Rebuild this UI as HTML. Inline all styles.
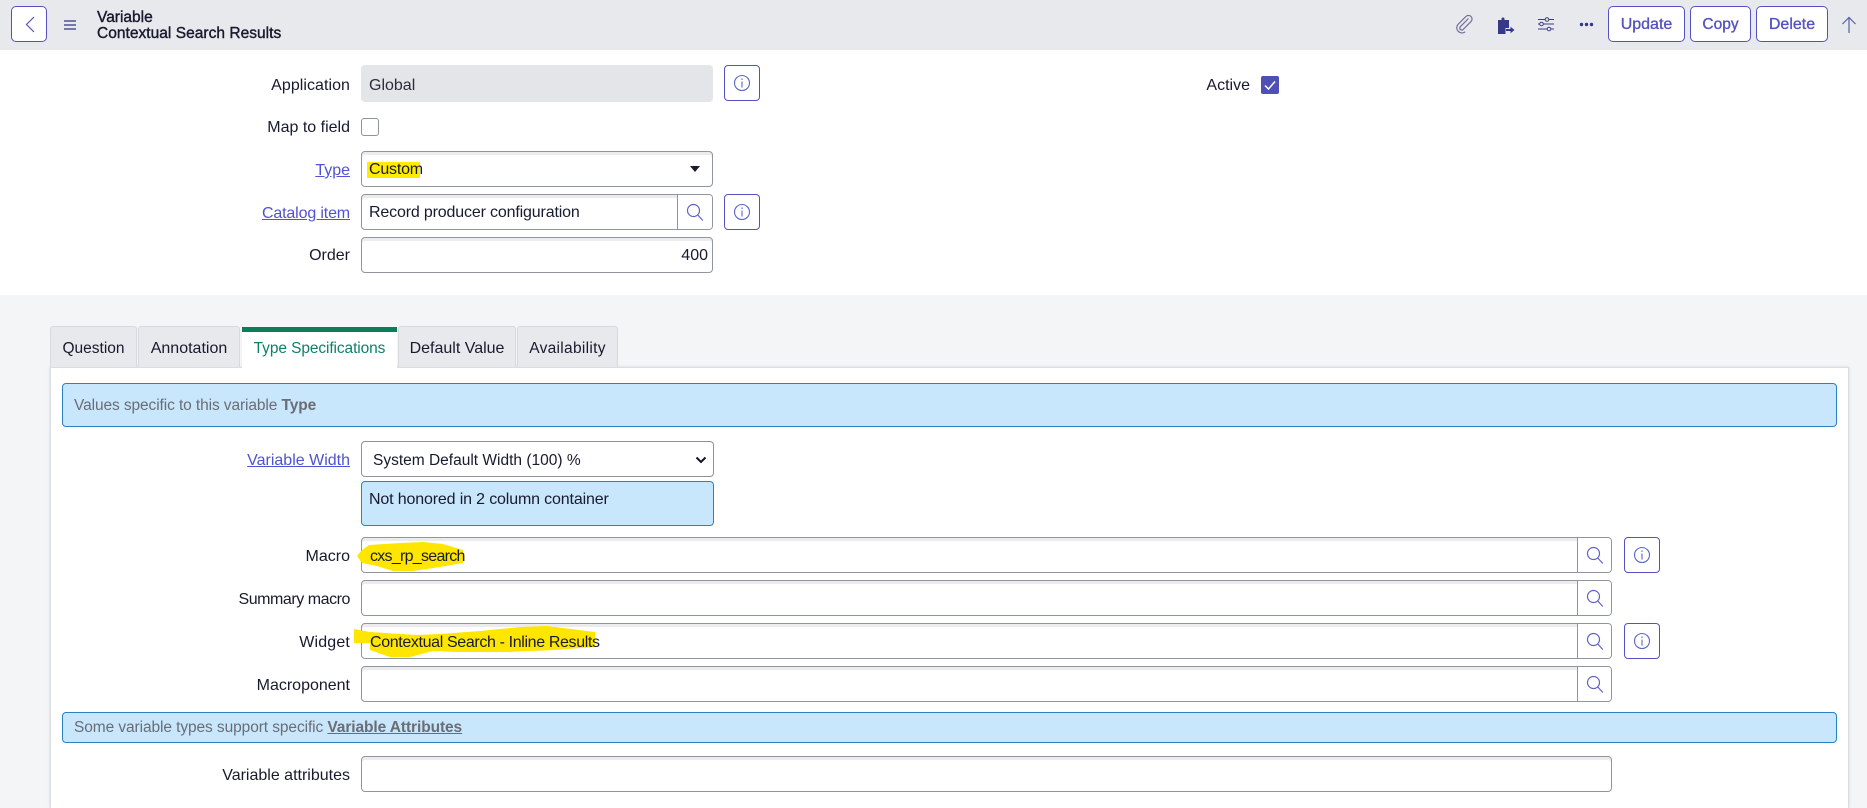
<!DOCTYPE html>
<html lang="en">
<head>
<meta charset="utf-8">
<title>Variable - Contextual Search Results</title>
<style>
html,body{margin:0;padding:0;}
body{width:1867px;height:808px;overflow:hidden;position:relative;background:#fff;font-family:"Liberation Sans",sans-serif;font-size:16px;color:#181a2e;}
div,a,svg{position:absolute;box-sizing:border-box;}
.hdr{left:0;top:0;width:1867px;height:50px;background:#e7e9ed;}
.btn{border:1.5px solid #5552c0;border-radius:5px;background:#fff;height:36px;top:6px;color:#5552c0;text-align:center;line-height:35px;font-size:16px;-webkit-text-stroke:.35px #5552c0;}
.t{white-space:nowrap;line-height:20px;}
.lbl{white-space:nowrap;line-height:20px;right:1517px;text-align:right;}
.link{color:#4f52d3;text-decoration:underline;}
.inp{left:361px;border:1.5px solid #9095a2;border-radius:4px;height:36px;background:#fff;box-shadow:inset 0 3px 0 #ececee;}
.sbtn{border-left:1.5px solid #9095a2;background:#fff;border-radius:0 3px 3px 0;}
.info{border:1.5px solid #5552c0;border-radius:4px;background:#fff;width:36px;height:36px;}
.tab{top:326px;height:41px;background:#e8e9ed;border:1px solid #d8d9df;border-bottom:none;border-radius:3px 3px 0 0;text-align:center;line-height:44px;font-size:15.5px;}
.blue{background:#c9e7fc;border:1.5px solid #2a82c2;border-radius:4px;}
</style>
</head>
<body>

<div class="hdr"></div>
<div class="btn" style="left:11px;width:36px;"></div>
<svg style="left:24px;top:15px" width="12" height="19" viewBox="0 0 12 19"><path d="M10 2L2.5 9.500L10 17" fill="none" stroke="#5552c0" stroke-width="1.2"/></svg>
<svg style="left:63px;top:19px" width="14" height="12" viewBox="0 0 14 12"><path d="M1 2h12M1 6h12M1 10h12" stroke="#34367f" stroke-width="1.2" fill="none"/></svg>
<div class="t" style="left:97px;top:8px;font-size:15.5px;-webkit-text-stroke:.4px #181a2e;">Variable</div>
<div class="t" style="left:97px;top:24px;font-size:15.5px;letter-spacing:.03px;-webkit-text-stroke:.4px #181a2e;">Contextual Search Results</div>

<svg style="left:1454px;top:14px" width="20" height="20" viewBox="0 0 20 20"><path d="M14.500 5.500L6.200 13.800a2 2 0 0 0 2.800 2.800L17 8.600a3.600 3.600 0 0 0-5.100-5.100L3.800 11.600a5.200 5.200 0 0 0 7.400 7.200" fill="none" stroke="#6f6f9c" stroke-width="1.2" transform="translate(0 -1)"/></svg>
<svg style="left:1497px;top:17px" width="18" height="18" viewBox="0 0 18 18"><path d="M1 3h3.500V2a1.500 1.500 0 0 1 3 0v1H12v8H8.500v6H1z" fill="#363888"/><path d="M9 12h4.500V9.800L17.500 13l-4 3.200V14H9z" fill="#363888"/></svg>
<svg style="left:1538px;top:17px" width="16" height="15" viewBox="0 0 16 15"><path d="M0 2.500h7M11 2.500h5M0 7h1.500M5.500 7H16M0 12h9M13 12h3" stroke="#3a3c86" stroke-width="1" fill="none"/><circle cx="9" cy="2.500" r="1.800" fill="none" stroke="#3a3c86"/><circle cx="3.500" cy="7" r="1.800" fill="none" stroke="#3a3c86"/><circle cx="11" cy="12" r="1.800" fill="none" stroke="#3a3c86"/></svg>
<svg style="left:1579px;top:22px" width="15" height="5" viewBox="0 0 15 5"><circle cx="2.500" cy="2.500" r="1.700" fill="#363888"/><circle cx="7.500" cy="2.500" r="1.700" fill="#363888"/><circle cx="12.500" cy="2.500" r="1.700" fill="#363888"/></svg>

<div class="btn" style="left:1608px;width:77px;">Update</div>
<div class="btn" style="left:1690px;width:61px;font-size:15.5px;">Copy</div>
<div class="btn" style="left:1756px;width:72px;">Delete</div>
<svg style="left:1841px;top:16px" width="16" height="17" viewBox="0 0 16 17"><path d="M8 17V1.500M1.500 8L8 1.500L14.500 8" fill="none" stroke="#5c5ea6" stroke-width="1.200"/></svg>

<div class="lbl" style="top:76px;letter-spacing:.05px;">Application</div>
<div style="left:361px;top:65px;width:352px;height:37px;background:#e4e5e9;border-radius:4px;"></div>
<div class="t" style="left:369px;top:76px;color:#2b2d3c;">Global</div>
<div class="info" style="left:724px;top:65px;"><svg style="left:8px;top:8px" width="18" height="18" viewBox="0 0 18 18"><circle cx="9" cy="9" r="7.500" fill="none" stroke="#5a67c8" stroke-width="1.100"/><path d="M9 7.500v6M9 4.500v1.500" stroke="#5a67c8" stroke-width="1.100"/></svg></div>

<div class="t" style="right:617px;top:76px;">Active</div>
<div style="left:1261px;top:76px;width:18px;height:18px;background:#4f50b6;border-radius:2px;"></div>
<svg style="left:1261px;top:76px" width="18" height="18" viewBox="0 0 18 18"><path d="M4 9.500l3.500 3.500L14 5.500" fill="none" stroke="#fff" stroke-width="1.500"/></svg>

<div class="lbl" style="top:118px;">Map to field</div>
<div style="left:361px;top:118px;width:18px;height:18px;border:1.500px solid #8f93a0;border-radius:3px;background:#fff;"></div>

<div class="lbl link" style="top:161px;">Type</div>
<div class="inp" style="top:151px;width:352px;"></div>
<div style="left:367px;top:162px;width:53px;height:16px;background:#ffec00;"></div>
<div class="t" style="left:369px;top:160px;letter-spacing:-.2px;">Custom</div>
<svg style="left:689px;top:165px" width="12" height="8" viewBox="0 0 12 8"><path d="M1 1h10L6 7z" fill="#1a1a2a"/></svg>

<div class="lbl link" style="top:204px;letter-spacing:-.15px;">Catalog item</div>
<div class="inp" style="top:194px;width:352px;"></div>
<div class="sbtn" style="left:677px;top:195px;width:35px;height:34px;"><svg style="left:8px;top:8px" width="18" height="19" viewBox="0 0 18 19"><circle cx="7.500" cy="7.500" r="6" fill="none" stroke="#5f62c7" stroke-width="1.200"/><path d="M11.800 12l5 5.500" stroke="#5f62c7" stroke-width="1.200"/></svg></div>
<div class="t" style="left:369px;top:203px;letter-spacing:-.16px;">Record producer configuration</div>
<div class="info" style="left:724px;top:194px;"><svg style="left:8px;top:8px" width="18" height="18" viewBox="0 0 18 18"><circle cx="9" cy="9" r="7.500" fill="none" stroke="#5a67c8" stroke-width="1.100"/><path d="M9 7.500v6M9 4.500v1.500" stroke="#5a67c8" stroke-width="1.100"/></svg></div>

<div class="lbl" style="top:246px;">Order</div>
<div class="inp" style="top:237px;width:352px;"></div>
<div class="t" style="right:1159px;top:246px;">400</div>

<div style="left:0;top:295px;width:1867px;height:513px;background:#f4f5f7;"></div>
<div style="left:50px;top:367px;width:1799px;height:441px;background:#fff;border:1px solid #dcdde2;border-bottom:none;box-shadow:0 0 3px #d8d9de;"></div>

<div class="tab" style="left:50px;width:87px;">Question</div>
<div class="tab" style="left:138px;width:102px;font-size:16px;">Annotation</div>
<div class="tab" style="left:242px;top:327px;width:155px;height:41px;background:#fff;border:none;border-top:5px solid #0d7d57;border-radius:0;color:#0f7f6a;line-height:34px;letter-spacing:-.1px;">Type Specifications</div>
<div class="tab" style="left:398px;width:118px;font-size:16px;">Default Value</div>
<div class="tab" style="left:517px;width:101px;letter-spacing:.3px;">Availability</div>

<div class="blue" style="left:62px;top:383px;width:1775px;height:44px;"></div>
<div class="t" style="left:74px;top:396px;color:#6a6d74;font-size:15.500px;letter-spacing:-.1px;">Values specific to this variable <b>Type</b></div>

<div class="lbl link" style="top:451px;">Variable Width</div>
<div class="inp" style="top:441px;width:353px;box-shadow:none;border-color:#8e929c;"></div>
<div class="t" style="left:373px;top:451px;font-size:15.500px;">System Default Width (100) %</div>
<svg style="left:695px;top:456px" width="12" height="8" viewBox="0 0 12 8"><path d="M1.500 1.500L6 6l4.500-4.500" fill="none" stroke="#14151f" stroke-width="2"/></svg>
<div class="blue" style="left:361px;top:481px;width:353px;height:45px;"></div>
<div class="t" style="left:369px;top:490px;letter-spacing:-.15px;">Not honored in 2 column container</div>

<div class="lbl" style="top:547px;">Macro</div>
<div class="inp" style="top:537px;width:1251px;"></div>
<div class="lbl" style="top:590px;letter-spacing:-.45px;">Summary macro</div>
<div class="inp" style="top:580px;width:1251px;"></div>
<div class="lbl" style="top:633px;letter-spacing:.15px;">Widget</div>
<div class="inp" style="top:623px;width:1251px;"></div>
<div class="lbl" style="top:676px;">Macroponent</div>
<div class="inp" style="top:666px;width:1251px;"></div>

<svg style="left:350px;top:535px" width="270" height="130" viewBox="350 535 270 130">
<path d="M369 545 L400 543 L423 542 L443 544 L463 550 L463 563 L440 567 L413 571 L393 571 L377 566 L362 563 L357 556 L362 550 Z" fill="#ffe600"/>
<path d="M354 629 L370 632 L417 635 L440 634 L480 631 L520 627 L547 626 L595 632 L595 647 L555 650 L507 652 L457 652 L433 651 L410 657 L390 657 L370 650 L370 643 L354 643 Z" fill="#ffe600"/>
</svg>

<div class="t" style="left:370px;top:547px;letter-spacing:-.72px;">cxs_rp_search</div>
<div class="t" style="left:370px;top:633px;letter-spacing:-.36px;">Contextual Search - Inline Results</div>

<div class="sbtn" style="left:1577px;top:538px;width:34px;height:34px;"><svg style="left:8px;top:8px" width="18" height="19" viewBox="0 0 18 19"><circle cx="7.500" cy="7.500" r="6" fill="none" stroke="#5f62c7" stroke-width="1.200"/><path d="M11.800 12l5 5.500" stroke="#5f62c7" stroke-width="1.200"/></svg></div>
<div class="sbtn" style="left:1577px;top:581px;width:34px;height:34px;"><svg style="left:8px;top:8px" width="18" height="19" viewBox="0 0 18 19"><circle cx="7.500" cy="7.500" r="6" fill="none" stroke="#5f62c7" stroke-width="1.200"/><path d="M11.800 12l5 5.500" stroke="#5f62c7" stroke-width="1.200"/></svg></div>
<div class="sbtn" style="left:1577px;top:624px;width:34px;height:34px;"><svg style="left:8px;top:8px" width="18" height="19" viewBox="0 0 18 19"><circle cx="7.500" cy="7.500" r="6" fill="none" stroke="#5f62c7" stroke-width="1.200"/><path d="M11.800 12l5 5.500" stroke="#5f62c7" stroke-width="1.200"/></svg></div>
<div class="sbtn" style="left:1577px;top:667px;width:34px;height:34px;"><svg style="left:8px;top:8px" width="18" height="19" viewBox="0 0 18 19"><circle cx="7.500" cy="7.500" r="6" fill="none" stroke="#5f62c7" stroke-width="1.200"/><path d="M11.800 12l5 5.500" stroke="#5f62c7" stroke-width="1.200"/></svg></div>

<div class="info" style="left:1624px;top:537px;"><svg style="left:8px;top:8px" width="18" height="18" viewBox="0 0 18 18"><circle cx="9" cy="9" r="7.500" fill="none" stroke="#5a67c8" stroke-width="1.100"/><path d="M9 7.500v6M9 4.500v1.500" stroke="#5a67c8" stroke-width="1.100"/></svg></div>
<div class="info" style="left:1624px;top:623px;"><svg style="left:8px;top:8px" width="18" height="18" viewBox="0 0 18 18"><circle cx="9" cy="9" r="7.500" fill="none" stroke="#5a67c8" stroke-width="1.100"/><path d="M9 7.500v6M9 4.500v1.500" stroke="#5a67c8" stroke-width="1.100"/></svg></div>

<div class="blue" style="left:62px;top:712px;width:1775px;height:31px;"></div>
<div class="t" style="left:74px;top:718px;color:#6a6d74;font-size:15.500px;letter-spacing:-.09px;">Some variable types support specific <b style="text-decoration:underline;">Variable Attributes</b></div>

<div class="lbl" style="top:766px;">Variable attributes</div>
<div class="inp" style="top:756px;width:1251px;"></div>
</body>
</html>
